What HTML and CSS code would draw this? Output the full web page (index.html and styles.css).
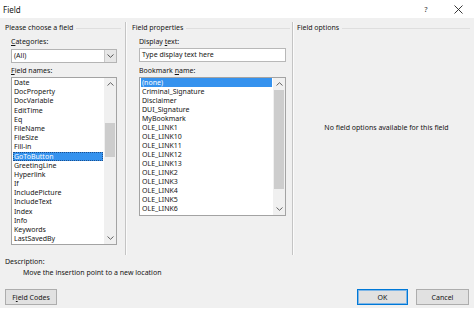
FILE: index.html
```html
<!DOCTYPE html>
<html lang="en">
<head>
    <meta charset="UTF-8">
    <title>Field</title>
    <link rel="stylesheet" href="styles.css">
</head>
<body>
    <div class="dialog">
        <div class="titlebar">
            <span class="title">Field</span>
            <span class="title-btn">?</span>
            <span class="title-btn">
                <svg width="9" height="9" viewBox="0 0 9 9"><path d="M0.5 0.5 L8.5 8.5 M8.5 0.5 L0.5 8.5" stroke="#222" stroke-width="0.9" fill="none"/></svg>
            </span>
        </div>

        <div class="client">
            <div class="columns">
                <!-- left column: field picker -->
                <section class="col col-choose">
                    <div class="group-head">Please choose a field</div>
                    <div class="group-body">
                        <div class="field-label"><u>C</u>ategories:</div>
                        <div class="combo">
                            <span class="combo-value">(All)</span>
                            <span class="combo-btn">
                                <svg width="7" height="4" viewBox="0 0 7 4"><path d="M0.5 0.5 L3.5 3.3 L6.5 0.5" stroke="#444" stroke-width="0.9" fill="none"/></svg>
                            </span>
                        </div>
                        <div class="field-label"><u>F</u>ield names:</div>
                        <div class="listbox list-fields">
                            <ul class="list-items">
                                <li>Date</li>
                                <li>DocProperty</li>
                                <li>DocVariable</li>
                                <li>EditTime</li>
                                <li>Eq</li>
                                <li>FileName</li>
                                <li>FileSize</li>
                                <li>Fill-in</li>
                                <li class="selected focused">GoToButton</li>
                                <li>GreetingLine</li>
                                <li>Hyperlink</li>
                                <li>If</li>
                                <li>IncludePicture</li>
                                <li>IncludeText</li>
                                <li>Index</li>
                                <li>Info</li>
                                <li>Keywords</li>
                                <li>LastSavedBy</li>
                            </ul>
                            <div class="scrollbar">
                                <span class="arrow">
                                    <svg width="7" height="4" viewBox="0 0 7 4"><path d="M0.5 3.5 L3.5 0.7 L6.5 3.5" stroke="#555" stroke-width="0.9" fill="none"/></svg>
                                </span>
                                <div class="track">
                                    <div class="thumb" style="margin-top:33px;height:34px"></div>
                                </div>
                                <span class="arrow">
                                    <svg width="7" height="4" viewBox="0 0 7 4"><path d="M0.5 0.5 L3.5 3.3 L6.5 0.5" stroke="#555" stroke-width="0.9" fill="none"/></svg>
                                </span>
                            </div>
                        </div>
                    </div>
                </section>

                <!-- middle column: properties -->
                <section class="col col-props">
                    <div class="group-head">Field properties</div>
                    <div class="group-body">
                        <div class="field-label">Display <u>t</u>ext:</div>
                        <div class="text-input">Type display text here</div>
                        <div class="field-label">Bookmark <u>n</u>ame:</div>
                        <div class="listbox list-bookmarks">
                            <ul class="list-items">
                                <li class="selected">(none)</li>
                                <li>Criminal_Signature</li>
                                <li>Disclaimer</li>
                                <li>DUI_Signature</li>
                                <li>MyBookmark</li>
                                <li>OLE_LINK1</li>
                                <li>OLE_LINK10</li>
                                <li>OLE_LINK11</li>
                                <li>OLE_LINK12</li>
                                <li>OLE_LINK13</li>
                                <li>OLE_LINK2</li>
                                <li>OLE_LINK3</li>
                                <li>OLE_LINK4</li>
                                <li>OLE_LINK5</li>
                                <li>OLE_LINK6</li>
                            </ul>
                            <div class="scrollbar">
                                <span class="arrow">
                                    <svg width="7" height="4" viewBox="0 0 7 4"><path d="M0.5 3.5 L3.5 0.7 L6.5 3.5" stroke="#555" stroke-width="0.9" fill="none"/></svg>
                                </span>
                                <div class="track">
                                    <div class="thumb" style="margin-top:0;height:99px"></div>
                                </div>
                                <span class="arrow">
                                    <svg width="7" height="4" viewBox="0 0 7 4"><path d="M0.5 0.5 L3.5 3.3 L6.5 0.5" stroke="#555" stroke-width="0.9" fill="none"/></svg>
                                </span>
                            </div>
                        </div>
                    </div>
                </section>

                <!-- right column: options -->
                <section class="col col-options">
                    <div class="group-head">Field options</div>
                    <p class="empty-note">No field options available for this field</p>
                </section>
            </div>

            <div class="description">
                <div class="description-label">Description:</div>
                <div class="description-text">Move the insertion point to a new location</div>
            </div>

            <div class="footer">
                <button type="button">F<u>i</u>eld Codes</button>
                <div class="footer-right">
                    <button type="button" class="btn-default">OK</button>
                    <button type="button" class="btn-cancel">Cancel</button>
                </div>
            </div>
        </div>
    </div>
</body>
</html>
```

FILE: styles.css
```css
* {
    margin: 0;
    padding: 0;
    box-sizing: border-box;
}

body {
    font-family: 'Noto Sans', 'Open Sans', sans-serif;
    font-size: 7px;
    color: #151515;
    background: #fff;
    width: 474px;
    height: 311px;
    overflow: hidden;
}

u {
    text-decoration-thickness: 0.6px;
    text-underline-offset: 1px;
}

.dialog {
    width: 474px;
    height: 311px;
    background: #fff;
}

.titlebar {
    height: 18px;
    display: flex;
    align-items: center;
    padding-left: 3px;
}

.title {
    flex: 1;
    font-size: 8px;
}

.title-btn {
    width: 32px;
    display: flex;
    justify-content: center;
    align-items: center;
    font-size: 7.5px;
    color: #333;
}

.client {
    height: 290px;
    background: #f0f0f0;
    display: flex;
    flex-direction: column;
}

.columns {
    display: flex;
    margin-top: 4px;
    height: 233px;
}

.col {
    padding-top: 1px;
}

.col-choose {
    width: 125px;
    padding-left: 5px;
    padding-right: 4px;
}

.col-props {
    width: 167px;
    border-left: 1px solid #c4c4c4;
    box-shadow: inset 1px 0 #fbfbfb;
    padding-left: 6px;
    padding-right: 2px;
}

.col-options {
    flex: 1;
    border-left: 1px solid #c4c4c4;
    box-shadow: inset 1px 0 #fbfbfb;
    padding-left: 4px;
    padding-right: 4px;
}

.group-head {
    display: flex;
    align-items: center;
    gap: 3px;
    height: 10px;
    line-height: 10px;
    white-space: nowrap;
}

.group-head::after {
    content: "";
    flex: 1;
    border-top: 1px solid #dedede;
}

.col-choose .group-body {
    padding-left: 6px;
    width: 112px;
}

.col-props .group-body {
    padding-left: 7px;
    width: 154px;
}

.field-label {
    height: 10px;
    line-height: 10px;
    margin-top: 4px;
}

.combo {
    display: flex;
    height: 14px;
    margin-top: 2px;
    background: #fff;
    border: 1px solid #b4b4b4;
}

.combo + .field-label {
    margin-top: 3px;
}

.combo-value {
    flex: 1;
    line-height: 12px;
    padding-left: 2px;
}

.combo-btn {
    width: 12px;
    display: flex;
    justify-content: center;
    align-items: center;
    background: #e6e6e6;
    border-left: 1px solid #c8c8c8;
}

.text-input {
    height: 14px;
    margin-top: 1px;
    background: #fff;
    border: 1px solid #b8b8b8;
    line-height: 12px;
    padding-left: 2px;
}

.listbox {
    display: flex;
    margin-top: 1px;
    background: #fff;
    border: 1px solid #a3a3a3;
}

.list-fields {
    height: 168px;
}

.list-bookmarks {
    height: 139px;
}

.list-items {
    flex: 1;
    list-style: none;
    overflow: hidden;
    padding-left: 1px;
    padding-right: 1px;
}

.list-items li {
    height: 9.2px;
    line-height: 9.2px;
    padding-left: 1px;
    white-space: nowrap;
}

.list-bookmarks .list-items li {
    height: 9px;
    line-height: 9px;
}

.list-items li.selected {
    background: #3592ee;
    color: #fff;
}

.list-items li.focused {
    outline: 1px dotted #1d4f8c;
    outline-offset: -1px;
}

.scrollbar {
    width: 12px;
    display: flex;
    flex-direction: column;
    background: #f0f0f0;
}

.arrow {
    height: 12px;
    display: flex;
    justify-content: center;
    align-items: center;
}

.track {
    flex: 1;
    padding: 0 1px;
}

.thumb {
    background: #cdcdcd;
}

.empty-note {
    margin-top: 90px;
    line-height: 10px;
    text-align: center;
    padding-left: 6px;
}

.description {
    margin-top: 2px;
    padding-left: 5px;
}

.description-label {
    line-height: 10px;
}

.description-text {
    line-height: 10px;
    margin-top: 1px;
    padding-left: 18px;
}

.footer {
    display: flex;
    justify-content: space-between;
    margin-top: 11px;
    padding: 0 5px;
}

.footer-right {
    display: flex;
    gap: 8px;
}

button {
    height: 16px;
    width: 52px;
    font-family: inherit;
    font-size: 7px;
    color: #151515;
    background: #e1e1e1;
    border: 1px solid #adadad;
}

.btn-default {
    width: 51px;
    border-color: #0078d7;
    box-shadow: inset 0 0 0 1px #7fb6e6;
}

.btn-cancel {
    width: 53px;
}
```
